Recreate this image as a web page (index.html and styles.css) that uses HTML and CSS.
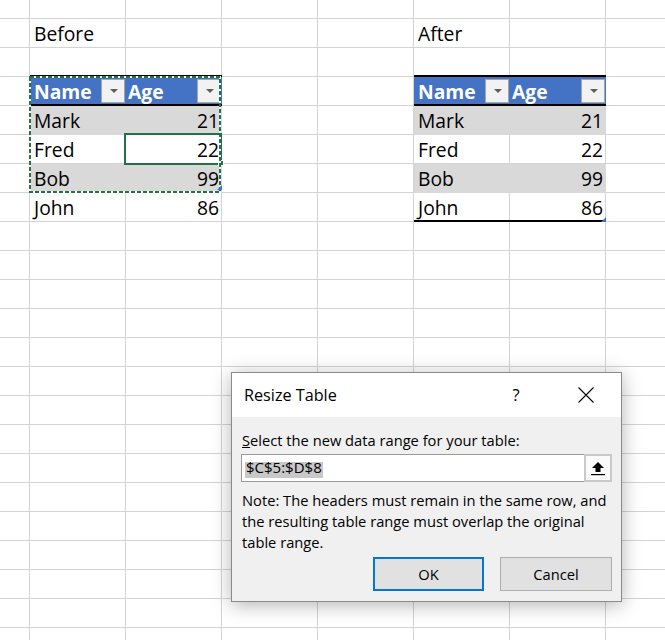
FILE: index.html
```html
<!DOCTYPE html>
<html lang="en">
<head>
<meta charset="utf-8">
<title>Resize Table</title>
<link rel="stylesheet" href="styles.css">
</head>
<body>
<div class="sheet">
  <div class="cell c2 r2">Before</div>
  <div class="cell c6 r2">After</div>

  <div class="cell hdr c2 r4"><span>Name</span><span class="filter"><svg width="8" height="4" viewBox="0 0 8 4"><polygon points="0,0 8,0 4,4" fill="#5f5f5f"/></svg></span></div>
  <div class="cell hdr c3 r4"><span>Age</span><span class="filter"><svg width="8" height="4" viewBox="0 0 8 4"><polygon points="0,0 8,0 4,4" fill="#5f5f5f"/></svg></span></div>
  <div class="cell band c2 r5">Mark</div>
  <div class="cell band num c3 r5">21</div>
  <div class="cell c2 r6">Fred</div>
  <div class="cell num c3 r6">22</div>
  <div class="cell band c2 r7">Bob</div>
  <div class="cell band num c3 r7">99<span class="corner corner-before"></span></div>
  <div class="cell c2 r8">John</div>
  <div class="cell num c3 r8">86</div>

  <div class="active c3 r6"><span class="fill-handle"></span></div>
  <div class="marquee">
    <svg class="ants-svg"><rect class="ants-bg"/><rect class="ants"/></svg>
  </div>

  <div class="cell hdr c6 r4"><span>Name</span><span class="filter"><svg width="8" height="4" viewBox="0 0 8 4"><polygon points="0,0 8,0 4,4" fill="#5f5f5f"/></svg></span></div>
  <div class="cell hdr c7 r4"><span>Age</span><span class="filter"><svg width="8" height="4" viewBox="0 0 8 4"><polygon points="0,0 8,0 4,4" fill="#5f5f5f"/></svg></span></div>
  <div class="cell band c6 r5">Mark</div>
  <div class="cell band num c7 r5">21</div>
  <div class="cell c6 r6">Fred</div>
  <div class="cell num c7 r6">22</div>
  <div class="cell band c6 r7">Bob</div>
  <div class="cell band num c7 r7">99</div>
  <div class="cell last c6 r8">John</div>
  <div class="cell last num c7 r8">86<span class="corner corner-after"></span></div>
</div>

<div class="dialog">
  <div class="titlebar">
    <span class="title">Resize Table</span>
    <span class="help">?</span>
    <span class="close"><svg width="16" height="16" viewBox="0 0 16 16"><path d="M0.5 0.5 L15.5 15.5 M15.5 0.5 L0.5 15.5" stroke="#000" stroke-width="1.1" fill="none"/></svg></span>
  </div>
  <div class="dbody">
    <div class="label"><u>S</u>elect the new data range for your table:</div>
    <div class="rangebox">
      <span class="sel">$C$5:$D$8</span>
      <span class="collapse"><svg width="16" height="16" viewBox="0 0 16 16"><polygon points="8,2 2,8 14,8" fill="#000"/><rect x="5.5" y="7.5" width="5" height="4.5" fill="#000"/><rect x="1" y="14" width="14" height="1.2" fill="#000"/></svg></span>
    </div>
    <p class="note">Note: The headers must remain in the same row, and<br>the resulting table range must overlap the original<br>table range.</p>
    <div class="buttons">
      <button class="btn btn-default">OK</button>
      <button class="btn">Cancel</button>
    </div>
  </div>
</div>
</body>
</html>
```

FILE: styles.css
```css
html, body {
  margin: 0;
  padding: 0;
}
body {
  width: 665px;
  height: 640px;
  overflow: hidden;
  position: relative;
  background: #fff;
  font-family: "Open Sans", "Noto Sans", sans-serif;
}

/* ---------- worksheet ---------- */
.sheet {
  display: grid;
  grid-template-columns: 30px repeat(6, 96px) 1fr;
  grid-template-rows: 19px repeat(22, 29px);
  height: 640px;
  background-color: #fff;
  background-image:
    linear-gradient(to right, #d4d4d4 0 1px, transparent 1px 100%),
    linear-gradient(to bottom, #d4d4d4 0 1px, transparent 1px 100%);
  background-size: 96px 100%, 100% 29px;
  background-position: 29px 0, 0 18px;
  font-size: 19.3px;
  color: #000;
}
.c2 { grid-column: 2; }
.c3 { grid-column: 3; }
.c6 { grid-column: 6; }
.c7 { grid-column: 7; }
.r2 { grid-row: 2; }
.r4 { grid-row: 4; }
.r5 { grid-row: 5; }
.r6 { grid-row: 6; }
.r7 { grid-row: 7; }
.r8 { grid-row: 8; }

.cell {
  position: relative;
  padding: 1px 3px 0 4px;
  line-height: 28px;
  white-space: nowrap;
}
.num { text-align: right; }
.band { background: #d9d9d9; }
.hdr {
  background: #4472c4;
  color: #fff;
  font-weight: bold;
  display: flex;
  justify-content: space-between;
  align-items: center;
  padding: 0 1px 0 4px;
  box-shadow: 0 -2px 0 #000, inset 0 -2px 0 #000;
}
.hdr span:first-child { margin-top: 1px; }
.c3.hdr span:first-child, .c7.hdr span:first-child { margin-left: -2px; }
.last { box-shadow: inset 0 -2px 0 #000; }

.filter {
  width: 24px;
  height: 24px;
  box-sizing: border-box;
  border: 1px solid #a6a6a6;
  background: #f2f2f2;
  display: flex;
  align-items: center;
  justify-content: center;
  margin-top: -1px;
}
.filter svg { display: block; margin-left: 1px; }

.corner {
  position: absolute;
  width: 5px;
  height: 5px;
  background: #4472c4;
  clip-path: polygon(100% 0, 100% 100%, 0 100%);
  z-index: 3;
}
.corner-before { right: 0; bottom: 3px; }
.corner-after { right: 0; bottom: 0; }

.active {
  position: relative;
  margin: -2px 0 -1px -2px;
  border: 2px solid #217346;
  z-index: 1;
}
.fill-handle {
  position: absolute;
  right: -4px;
  bottom: -3px;
  width: 4px;
  height: 4px;
  background: #217346;
  border: 1px solid #fff;
  z-index: 4;
}

.marquee {
  grid-column: 2 / 4;
  grid-row: 4 / 8;
  margin: -1px 1px 0 -1px;
  z-index: 2;
}
.ants-svg {
  display: block;
  width: 100%;
  height: 100%;
}
.ants-bg, .ants {
  x: 1px;
  y: 1px;
  width: calc(100% - 2px);
  height: calc(100% - 2px);
  fill: none;
  stroke-width: 2;
}
.ants-bg { stroke: #fff; }
.ants { stroke: #217346; stroke-dasharray: 4 2; }

/* ---------- dialog ---------- */
.dialog {
  position: absolute;
  left: 231px;
  top: 372px;
  width: 391px;
  height: 230px;
  box-sizing: border-box;
  border: 1px solid #8a8a8a;
  background: #f0f0f0;
  box-shadow: 0 3px 18px rgba(0, 0, 0, 0.3);
  display: flex;
  flex-direction: column;
  color: #000;
}
.titlebar {
  height: 44px;
  flex: none;
  background: #fff;
  display: flex;
  align-items: center;
  padding: 0 27px 0 12px;
}
.title {
  flex: 1;
  font-size: 16.2px;
  line-height: 44px;
}
.help {
  width: 20px;
  text-align: center;
  font-size: 16.5px;
  line-height: 44px;
}
.close {
  margin-left: 52px;
  display: flex;
}
.close svg { display: block; }

.dbody {
  flex: 1;
  padding: 13px 9px 10px 9px;
  font-size: 14.7px;
}
.label {
  line-height: 20px;
  padding-left: 1px;
  margin-bottom: 4px;
  white-space: nowrap;
}
.rangebox {
  height: 28px;
  box-sizing: border-box;
  border: 1px solid #9a9a9a;
  background: #fff;
  display: flex;
}
.sel {
  align-self: flex-start;
  margin: 7px 0 0 3px;
  height: 16px;
  line-height: 10.6px;
  padding: 0 1px;
  background: #c8c8c8;
  white-space: nowrap;
  font-size: 15px;
}
.collapse {
  margin: -1px -1px -1px auto;
  width: 28px;
  height: 28px;
  box-sizing: border-box;
  border: 2px solid #c9c9c9;
  background: #fafafa;
  display: flex;
  align-items: center;
  justify-content: center;
}
.collapse svg { display: block; }
.note {
  margin: 8px 0 0 0;
  line-height: 21px;
  padding-left: 1px;
  white-space: nowrap;
}
.buttons {
  margin-top: 4px;
  display: flex;
  justify-content: flex-end;
  gap: 16px;
}
.btn {
  height: 34px;
  width: 112px;
  box-sizing: border-box;
  padding: 0;
  margin: 0;
  border: 1px solid #adadad;
  background: #e1e1e1;
  font-family: "Open Sans", "Noto Sans", sans-serif;
  font-size: 14.7px;
  color: #000;
}
.btn-default {
  width: 111px;
  border: 2px solid #0078d7;
}
```
